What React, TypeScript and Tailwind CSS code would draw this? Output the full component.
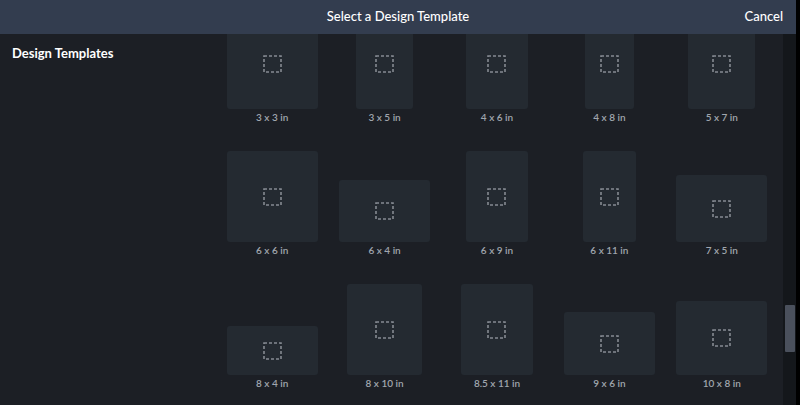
import React from "react";

type Template = { label: string; w: number; h: number };

// each row of the picker, sized in px so the thumbnails keep their aspect
const rows: Template[][] = [
  [
    { label: "3 x 3 in", w: 91, h: 91 },
    { label: "3 x 5 in", w: 57, h: 91 },
    { label: "4 x 6 in", w: 62, h: 91 },
    { label: "4 x 8 in", w: 49, h: 91 },
    { label: "5 x 7 in", w: 67, h: 91 },
  ],
  [
    { label: "6 x 6 in", w: 91, h: 91 },
    { label: "6 x 4 in", w: 91, h: 62 },
    { label: "6 x 9 in", w: 62, h: 91 },
    { label: "6 x 11 in", w: 53, h: 91 },
    { label: "7 x 5 in", w: 91, h: 67 },
  ],
  [
    { label: "8 x 4 in", w: 91, h: 49 },
    { label: "8 x 10 in", w: 75, h: 91 },
    { label: "8.5 x 11 in", w: 72, h: 91 },
    { label: "9 x 6 in", w: 91, h: 63 },
    { label: "10 x 8 in", w: 91, h: 74 },
  ],
];

const PlaceholderIcon = () => (
  <svg width="19" height="18" viewBox="0 0 19 18" fill="none">
    <rect
      x="1"
      y="1"
      width="17"
      height="16"
      stroke="#858a92"
      strokeWidth="1.6"
      strokeDasharray="3 2"
    />
  </svg>
);

const TemplateCard = ({ t }: { t: Template }) => (
  <div className="flex flex-col items-center">
    <div className="h-[91px] w-full flex items-end justify-center">
      <div
        className="bg-[#242a31] rounded-[3px] flex items-center justify-center"
        style={{ width: t.w, height: t.h }}
      >
        <PlaceholderIcon />
      </div>
    </div>
    <div className="mt-[2px] h-[40px] text-[10px] leading-[12px] text-[#a0a6ae] font-semibold">
      {t.label}
    </div>
  </div>
);

export default function App() {
  return (
    <div className="w-[800px] h-[405px] bg-black overflow-hidden font-['Lato','Noto_Sans',sans-serif]">
      <div className="w-[796px] h-full flex flex-col bg-[#1c1f25]">
        {/* top bar */}
        <div className="h-[34px] shrink-0 bg-[#333d4f] flex items-center justify-center relative">
          <span className="text-[13px] text-white font-medium">Select a Design Template</span>
          <button className="absolute right-[13px] top-1/2 -translate-y-1/2 text-[13px] text-white font-medium">
            Cancel
          </button>
        </div>

        <div className="flex-1 flex overflow-hidden">
          {/* sidebar */}
          <div className="w-[216px] shrink-0 pl-[12px] pt-[11px]">
            <h2 className="text-[13px] font-bold text-white leading-[16px]">Design Templates</h2>
          </div>

          {/* scrolled template grid */}
          <div className="w-[567px] overflow-hidden">
            <div className="mt-[-16px] w-[562px] flex flex-col">
              {rows.map((row, i) => (
                <div key={i} className="grid grid-cols-5">
                  {row.map((t) => (
                    <TemplateCard key={t.label} t={t} />
                  ))}
                </div>
              ))}
            </div>
          </div>

          {/* scrollbar */}
          <div className="w-[13px] shrink-0 bg-[#14171b] pt-[271px] pl-[1.5px]">
            <div className="w-[10px] h-[47px] bg-[#4a505c] rounded-[1px]" />
          </div>
        </div>
      </div>
    </div>
  );
}
